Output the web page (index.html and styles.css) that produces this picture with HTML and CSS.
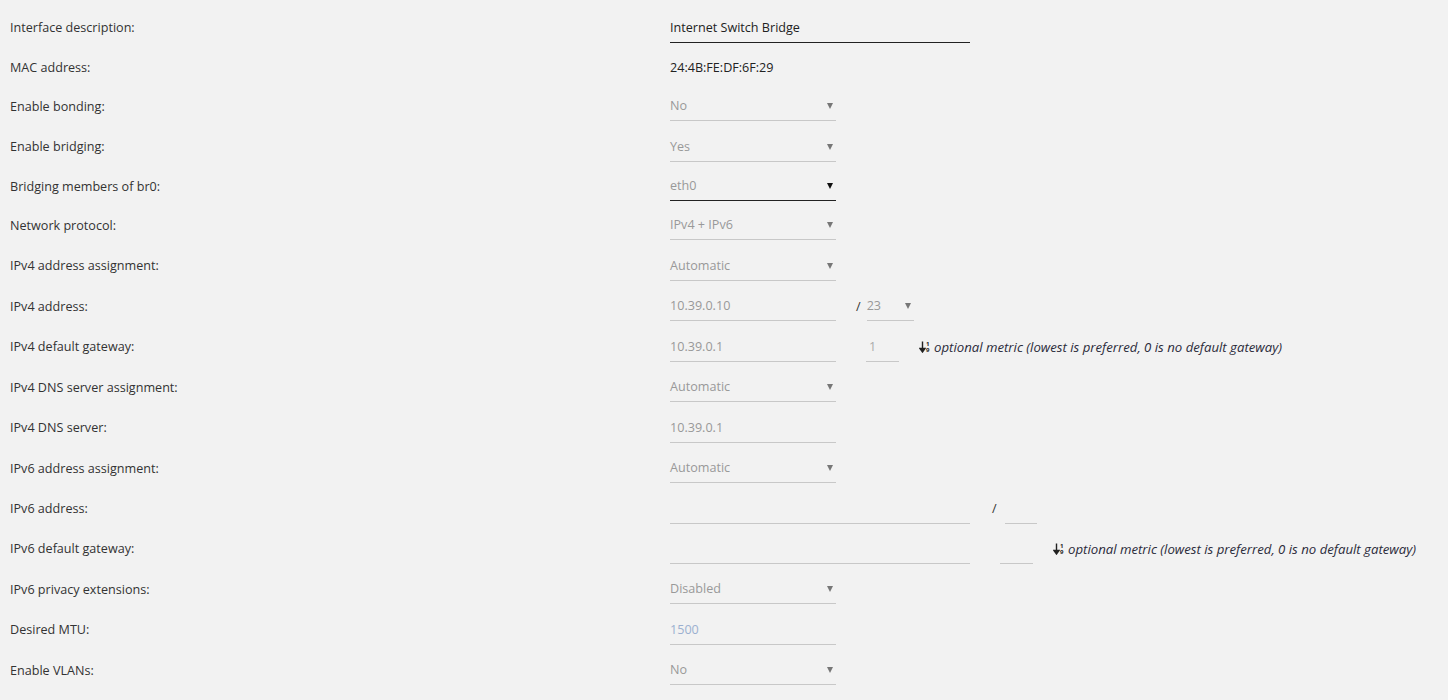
FILE: index.html
```html
<!DOCTYPE html>
<html lang="en">
<head>
  <meta charset="UTF-8" />
  <meta name="viewport" content="width=device-width, initial-scale=1.0">
  <title>Interface br0</title>
  <link rel="stylesheet" href="styles.css">
</head>
<body>

  <!-- Interface settings -->
  <form class="settings">
    <div class="row first">
      <div class="label">Interface description:</div>
      <div class="field text wide active">Internet Switch Bridge</div>
    </div>
    <div class="row mac">
      <div class="label">MAC address:</div>
      <div class="value">24:4B:FE:DF:6F:29</div>
    </div>
    <div class="row">
      <div class="label">Enable bonding:</div>
      <div class="field select">No<span class="arrow"></span></div>
    </div>
    <div class="row">
      <div class="label">Enable bridging:</div>
      <div class="field select">Yes<span class="arrow"></span></div>
    </div>
    <div class="row short">
      <div class="label">Bridging members of br0:</div>
      <div class="field select active">eth0<span class="arrow"></span></div>
    </div>
    <div class="row">
      <div class="label">Network protocol:</div>
      <div class="field select">IPv4 + IPv6<span class="arrow"></span></div>
    </div>
    <div class="row">
      <div class="label">IPv4 address assignment:</div>
      <div class="field select">Automatic<span class="arrow"></span></div>
    </div>
    <div class="row">
      <div class="label">IPv4 address:</div>
      <div class="field text">10.39.0.10</div>
      <span class="slash">/</span>
      <div class="field select prefix">23<span class="arrow"></span></div>
    </div>
    <div class="row">
      <div class="label">IPv4 default gateway:</div>
      <div class="field text">10.39.0.1</div>
      <div class="field text metric">1</div>
      <span class="sort-icon">
        <svg width="7" height="12" viewBox="0 0 7 12"><path d="M3.5 0.5v9M1 7.5l2.5 3.5 2.5-3.5z" stroke="#222" stroke-width="1.4" fill="#222"/></svg><span class="digits"><span>1</span><span>9</span></span>
      </span>
      <span class="hint">optional metric (lowest is preferred, 0 is no default gateway)</span>
    </div>
    <div class="row">
      <div class="label">IPv4 DNS server assignment:</div>
      <div class="field select">Automatic<span class="arrow"></span></div>
    </div>
    <div class="row">
      <div class="label">IPv4 DNS server:</div>
      <div class="field text">10.39.0.1</div>
    </div>
    <div class="row">
      <div class="label">IPv6 address assignment:</div>
      <div class="field select">Automatic<span class="arrow"></span></div>
    </div>
    <div class="row">
      <div class="label">IPv6 address:</div>
      <div class="field text wide"></div>
      <span class="slash wide-slash">/</span>
      <div class="field text prefix6"></div>
    </div>
    <div class="row">
      <div class="label">IPv6 default gateway:</div>
      <div class="field text wide"></div>
      <div class="field text metric"></div>
      <span class="sort-icon">
        <svg width="7" height="12" viewBox="0 0 7 12"><path d="M3.5 0.5v9M1 7.5l2.5 3.5 2.5-3.5z" stroke="#222" stroke-width="1.4" fill="#222"/></svg><span class="digits"><span>1</span><span>9</span></span>
      </span>
      <span class="hint">optional metric (lowest is preferred, 0 is no default gateway)</span>
    </div>
    <div class="row">
      <div class="label">IPv6 privacy extensions:</div>
      <div class="field select">Disabled<span class="arrow"></span></div>
    </div>
    <div class="row">
      <div class="label">Desired MTU:</div>
      <div class="field text placeholder">1500</div>
    </div>
    <div class="row">
      <div class="label">Enable VLANs:</div>
      <div class="field select">No<span class="arrow"></span></div>
    </div>
  </form>

</body>
</html>
```

FILE: styles.css
```css
body { margin:0; background:#f2f2f2; font-family: "Open Sans", sans-serif; font-size:12.6px; color:#333;}
.settings { padding-top:9px; }
.row { display:flex; align-items:center; height:40.45px; }
.row.first { height:37.5px; }
.row.mac { height:39.5px; }
.row.short { height:38.4px; }
.label { width:670px; padding-left:10px; box-sizing:border-box; flex:none; }
.mac .label, .value { padding-top:3px; }
.value { color:#222; }
.field { height:30px; width:166px; display:flex; align-items:center; box-sizing:border-box; border-bottom:1px solid #c8c8c8; color:#999; position:relative; flex:none;}
.field.wide { width:300px; }
.field.active { border-bottom-color:#222; }
.field.text.active { color:#222; }
.select .arrow { position:absolute; right:3px; top:12px; width:0; height:0; border-left:3px solid transparent; border-right:3px solid transparent; border-top:6px solid #777; }
.select.active .arrow { border-top-color:#111; }
.slash { margin:0 6px 0 20px; color:#333; }
.wide-slash { margin:0 8px 0 22px; }
.field.prefix { width:47px; }
.field.prefix6 { width:32px; }
.field.metric { width:33px; margin-left:30px; padding-left:3px; color:#aaa; }
.placeholder { color:#9bb0d0; }
.sort-icon { display:flex; align-items:center; width:12px; margin-left:20px; margin-right:3px; flex:none; }
.digits { display:flex; flex-direction:column; width:5px; font-size:6px; line-height:6px; color:#222; font-weight:bold;}
.hint { font-style:italic; font-size:13.2px; color:#2b2b3a; white-space:nowrap; }
```
